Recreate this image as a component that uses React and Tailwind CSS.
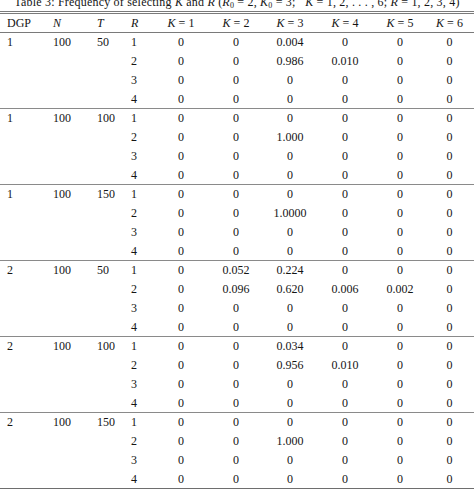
const zeros = ['0', '0', '0', '0', '0', '0'];

const groups = [
  { dgp: '1', n: '100', t: '50', rows: [['0', '0', '0.004', '0', '0', '0'], ['0', '0', '0.986', '0.010', '0', '0'], zeros, zeros] },
  { dgp: '1', n: '100', t: '100', rows: [zeros, ['0', '0', '1.000', '0', '0', '0'], zeros, zeros] },
  { dgp: '1', n: '100', t: '150', rows: [zeros, ['0', '0', '1.0000', '0', '0', '0'], zeros, zeros] },
  { dgp: '2', n: '100', t: '50', rows: [['0', '0.052', '0.224', '0', '0', '0'], ['0', '0.096', '0.620', '0.006', '0.002', '0'], zeros, zeros] },
  { dgp: '2', n: '100', t: '100', rows: [['0', '0', '0.034', '0', '0', '0'], ['0', '0', '0.956', '0.010', '0', '0'], zeros, zeros] },
  { dgp: '2', n: '100', t: '150', rows: [zeros, ['0', '0', '1.000', '0', '0', '0'], zeros, zeros] },
];

const cols = 'grid grid-cols-[53px_44px_34px_24px_52px_58px_50px_60px_50px_49px] items-center';

const I = ({ children }) => <span className="italic">{children}</span>;

const App = () => {
  return (
    <div className="w-[474px] h-[490px] overflow-hidden bg-white text-[#151515] text-[12px]" style={{ fontFamily: '"Liberation Serif", "Times New Roman", serif' }}>
      {/* caption, clipped at the top */}
      <div className="h-[11px] overflow-hidden">
        <div className="-mt-[4px] leading-[12px] text-center whitespace-nowrap tracking-[0.2px]">
          Table 3: Frequency of selecting <I>K</I> and <I>R</I> (<I>R</I><sub className="text-[8px]">0</sub> = 2, <I>K</I><sub className="text-[8px]">0</sub> = 3;&nbsp;&nbsp; <I>K</I> = 1, 2, . . . , 6; <I>R</I> = 1, 2, 3, 4)
        </div>
      </div>
      <div className="border-t border-[#7a7a7a]" />
      <div className="h-px" />
      <div className="border-t border-[#7a7a7a]" />

      {/* header */}
      <div className={`${cols} h-[18px]`}>
        <div className="pl-[7px]">DGP</div>
        <div><I>N</I></div>
        <div><I>T</I></div>
        <div><I>R</I></div>
        {[1, 2, 3, 4, 5, 6].map((k) => (
          <div key={k} className="text-center"><I>K</I> = {k}</div>
        ))}
      </div>
      <div className="border-t border-[#7a7a7a]" />

      {groups.map((g, gi) => (
        <div key={gi} className={gi < groups.length - 1 ? 'border-b border-[#8a8a8a]' : ''}>
          {g.rows.map((r, ri) => (
            <div key={ri} className={`${cols} h-[18.75px]`}>
              <div className="pl-[7px]">{ri === 0 ? g.dgp : ''}</div>
              <div>{ri === 0 ? g.n : ''}</div>
              <div>{ri === 0 ? g.t : ''}</div>
              <div>{ri + 1}</div>
              {r.map((v, vi) => (
                <div key={vi} className="text-center">{v}</div>
              ))}
            </div>
          ))}
        </div>
      ))}

      <div className="border-t border-[#6e6e6e]" />
      <div className="h-px" />
      <div className="h-[2px] bg-[#a0a0a0]" />
    </div>
  );
};

export default App;
